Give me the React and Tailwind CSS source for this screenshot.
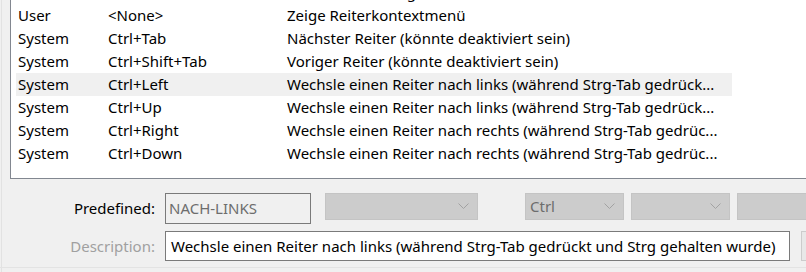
import React from "react";

const rows = [
  ["User", "<None>", "Schließe alle übrigen Reiter"],
  ["User", "<None>", "Zeige Reiterkontextmenü"],
  ["System", "Ctrl+Tab", "Nächster Reiter (könnte deaktiviert sein)"],
  ["System", "Ctrl+Shift+Tab", "Voriger Reiter (könnte deaktiviert sein)"],
  ["System", "Ctrl+Left", "Wechsle einen Reiter nach links (während Strg-Tab gedrück..."],
  ["System", "Ctrl+Up", "Wechsle einen Reiter nach links (während Strg-Tab gedrück..."],
  ["System", "Ctrl+Right", "Wechsle einen Reiter nach rechts (während Strg-Tab gedrüc..."],
  ["System", "Ctrl+Down", "Wechsle einen Reiter nach rechts (während Strg-Tab gedrüc..."],
];

function Chevron() {
  return (
    <svg width="11" height="7" viewBox="0 0 11 7" className="shrink-0">
      <polyline points="0.5,0.5 5.5,5.5 10.5,0.5" fill="none" stroke="#a2a2a2" strokeWidth="1" />
    </svg>
  );
}

function Combo({ w, text }) {
  return (
    <div
      className={`h-[27px] ${w} shrink-0 bg-[#cccccc] border border-[#c4c4c4] flex items-center justify-between pl-[4px] pr-[8px]`}
    >
      <span className="text-[#6d6d6d]">{text}</span>
      <Chevron />
    </div>
  );
}

export default function App() {
  return (
    <div
      className="w-[806px] h-[272px] overflow-hidden bg-[#f0f0f0] text-[15px] text-black relative"
      style={{ fontFamily: '"Noto Sans", "Open Sans", sans-serif' }}
    >
      <div className="absolute left-[1px] top-0 bottom-0 w-px bg-[#e2e2e2]" />
      {/* list view */}
      <div className="ml-[10px] -mt-[20px] h-[199px] w-[830px] bg-white border-l border-b border-[#828790] pl-[5px] pt-[1px]">
        {rows.map((r, i) => (
          <div
            key={i}
            className={`flex h-[23px] w-[716px] items-center whitespace-nowrap ${i === 4 ? "bg-[#f0f0f0]" : ""}`}
          >
            <div className="w-[90px] shrink-0 pl-[2px] overflow-hidden">{r[0]}</div>
            <div className="w-[179px] shrink-0 pl-[2px] overflow-hidden">{r[1]}</div>
            <div className="w-[447px] shrink-0 pl-[2px] overflow-hidden">{r[2]}</div>
          </div>
        ))}
      </div>

      {/* Predefined row */}
      <div className="flex items-start mt-[14px] whitespace-nowrap w-[900px]">
        <div className="w-[155px] shrink-0 h-[31px] flex items-center justify-end">Predefined:</div>
        <div className="ml-[10px] shrink-0 h-[31px] w-[146px] border border-[#7a7a7a] bg-[#f0f0f0] flex items-center pl-[3px] text-[#6d6d6d]">
          NACH-LINKS
        </div>
        <div className="ml-[14px] shrink-0">
          <Combo w="w-[153px]" text="" />
        </div>
        <div className="ml-[47px] shrink-0">
          <Combo w="w-[99px]" text="Ctrl" />
        </div>
        <div className="ml-[7px] shrink-0">
          <Combo w="w-[99px]" text="" />
        </div>
        <div className="ml-[7px] shrink-0">
          <Combo w="w-[99px]" text="" />
        </div>
      </div>

      {/* Description row */}
      <div className="flex items-start mt-[7px] whitespace-nowrap w-[900px]">
        <div className="w-[155px] shrink-0 h-[30px] flex items-center justify-end text-[#a0a0a0]">Description:</div>
        <div className="ml-[10px] h-[30px] w-[625px] shrink-0 border border-[#7a7a7a] bg-white flex items-center pl-[5px]">
          Wechsle einen Reiter nach links (während Strg-Tab gedrückt und Strg gehalten wurde)
        </div>
        <div className="ml-[11px] h-[30px] w-[40px] shrink-0 border border-[#cccccc] bg-[#e8e8e8]" />
      </div>
      <div className="absolute left-0 right-0 top-[267px] h-px bg-[#e3e3e3]" />
    </div>
  );
}
